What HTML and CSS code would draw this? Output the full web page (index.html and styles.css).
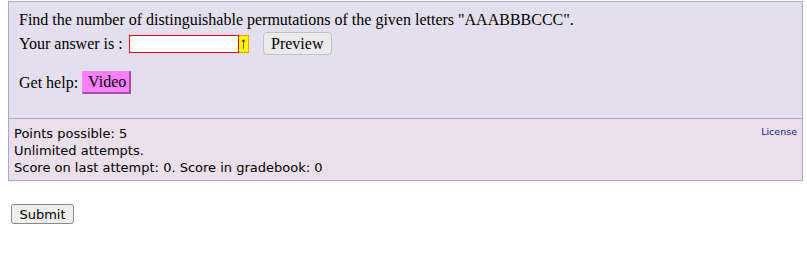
FILE: index.html
```html
<!DOCTYPE html>
<html>
<head>
<meta charset="utf-8">
<link rel="stylesheet" href="styles.css">
</head>
<body>
<div class="question">
  <div class="qtext">Find the number of distinguishable permutations of the given letters "AAABBBCCC".</div>
  <div class="answer-row">
    <span class="label">Your answer is :</span>
    <span class="input-wrap"><span class="answer-input"></span><span class="tip">&#8593;</span></span>
    <button class="preview">Preview</button>
  </div>
  <div class="help-row">
    <span class="label">Get help:</span>
    <span class="video">Video</span>
  </div>
</div>
<div class="info">
  <a class="license">License</a>
  <div>Points possible: 5</div>
  <div>Unlimited attempts.</div>
  <div>Score on last attempt: 0. Score in gradebook: 0</div>
</div>
<div class="submit-row"><button class="submit">Submit</button></div>
</body>
</html>
```
FILE: styles.css
```css
html, body { background: #ffffff; }
body {
  margin: 1px 4px 0 8px;
  font-family: "Liberation Serif", "Times New Roman", serif;
  font-size: 16px;
  color: #000;
}
.question {
  background: #e3dfef;
  border: 1px solid #aaa6d6;
  padding: 9px 10px 22px 10px;
  height: 85px;
  box-sizing: content-box;
}
.qtext { line-height: 18px; }
.answer-row {
  display: flex;
  align-items: center;
  margin-top: 3px;
  height: 23px;
}
.label { line-height: 18px; }
.input-wrap {
  display: flex;
  margin-left: 6px;
  height: 18px;
}
.answer-input {
  display: block;
  width: 108px;
  height: 16px;
  background: #fff;
  border: 1px solid #e00000;
}
.tip {
  display: block;
  width: 9px;
  height: 16px;
  overflow: hidden;
  background: #ffff00;
  border: 1px solid #f0a000;
  border-left: none;
  font-family: "Liberation Serif", serif;
  font-size: 17px;
  line-height: 16px;
  text-align: center;
  color: #600000;
}
.preview {
  margin-left: 14px;
  font-family: "Liberation Serif", "Times New Roman", serif;
  font-size: 16px;
  height: 23px;
  width: 69px;
  padding: 0;
  background: #ebebeb;
  border: 1px solid #c2c2c2;
  border-radius: 4px;
  color: #000;
}
.help-row {
  display: flex;
  align-items: center;
  margin-top: 16px;
  height: 23px;
}
.video {
  margin-left: 4px;
  background: #ff80ff;
  border: 1px solid #ff80ff;
  border-right: 2px solid #a050a0;
  border-bottom: 2px solid #a050a0;
  padding: 0 3px 0 5px;
  height: 20px;
  line-height: 20px;
}
.info {
  position: relative;
  background: #ebdfec;
  border: 1px solid #aaa6d6;
  border-top: none;
  padding: 6px 5px 3px 5px;
  font-family: "DejaVu Sans", Verdana, sans-serif;
  font-size: 13px;
  line-height: 17px;
  height: 52px;
  box-sizing: content-box;
}
.license {
  position: absolute;
  right: 5px;
  top: 4px;
  font-size: 9.5px;
  color: #1a1a8a;
}
.submit-row { margin-top: 23px; padding-left: 3px; }
.submit {
  font-family: "DejaVu Sans", Verdana, sans-serif;
  font-size: 13px;
  height: 20px;
  width: 63px;
  padding: 0;
  background: #efefef;
  border: 1px solid #8a8a8a;
  border-radius: 3px;
  color: #000;
}
```
